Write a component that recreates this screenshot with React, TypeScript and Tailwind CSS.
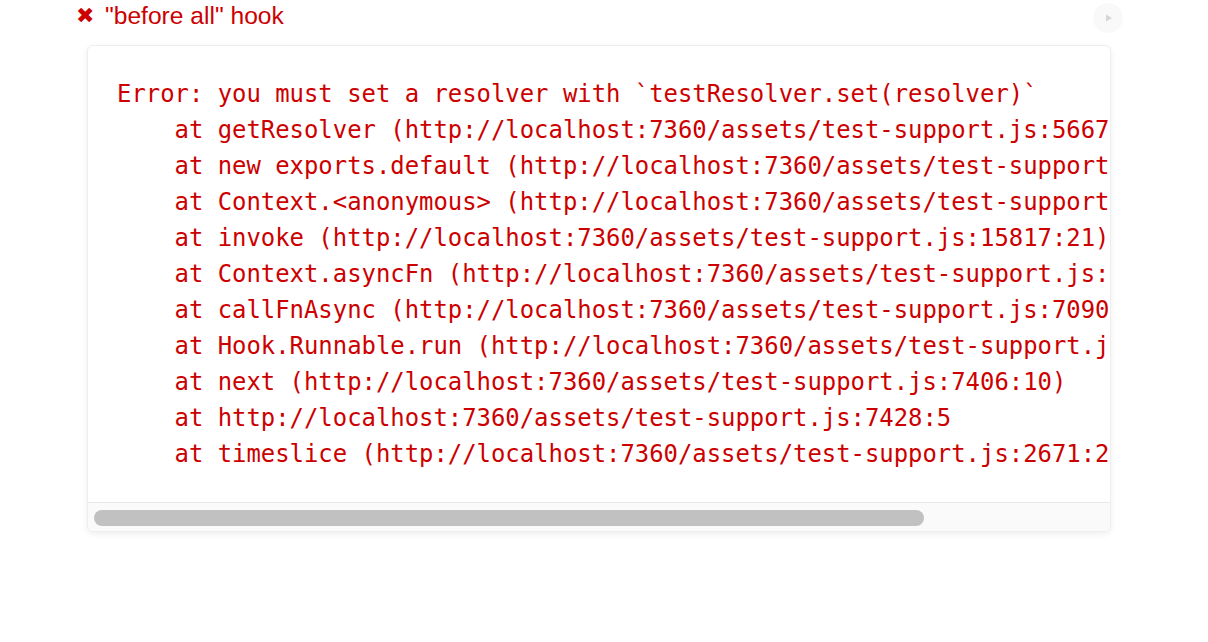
const lines = [
  "Error: you must set a resolver with `testResolver.set(resolver)`",
  "    at getResolver (http://localhost:7360/assets/test-support.js:5667:11)",
  "    at new exports.default (http://localhost:7360/assets/test-support.js:5700:22)",
  "    at Context.<anonymous> (http://localhost:7360/assets/test-support.js:5991:20)",
  "    at invoke (http://localhost:7360/assets/test-support.js:15817:21)",
  "    at Context.asyncFn (http://localhost:7360/assets/test-support.js:15802:11)",
  "    at callFnAsync (http://localhost:7360/assets/test-support.js:7090:8)",
  "    at Hook.Runnable.run (http://localhost:7360/assets/test-support.js:7027:7)",
  "    at next (http://localhost:7360/assets/test-support.js:7406:10)",
  "    at http://localhost:7360/assets/test-support.js:7428:5",
  "    at timeslice (http://localhost:7360/assets/test-support.js:2671:27)",
]

export default function App() {
  return (
    <div className="min-h-[642px] w-[1208px] bg-white">
      <div className="w-[1123px] pl-[76px]">
        {/* Test title + replay */}
        <div className="flex h-[45px] items-start justify-between">
          <h2 className="flex items-center text-[#cc0000] font-['Liberation_Sans',Arial,sans-serif]">
            <span className="w-[29px] text-[22px] leading-[32px] font-['DejaVu_Sans',sans-serif]">✖</span>
            <span className="text-[24.6px] leading-[32px]">"before all" hook</span>
          </h2>
          <a className="mt-[3px] flex h-[30px] w-[30px] items-center justify-center rounded-full bg-[#f9f9f9]">
            <svg width="8" height="8" viewBox="0 0 8 8" className="ml-[1px]">
              <path d="M1 0.5 L7 4 L1 7.5 Z" fill="#d6d6d6" />
            </svg>
          </a>
        </div>

        {/* Error stack */}
        <div className="ml-[11px] w-[1024px] overflow-hidden rounded-[6px] border border-[#eeeeee] bg-white shadow-[0_2px_6px_#eeeeee]">
          <pre className="overflow-hidden whitespace-pre px-[29px] pt-[30px] pb-[30px] text-[23.9px] leading-[36px] text-[#cc0000] font-['DejaVu_Sans_Mono',Menlo,monospace]">
            {lines.join("\n")}
          </pre>
          <div className="h-[29px] border-t border-[#e8e8e8] bg-[#fafafa] pl-[6px] pt-[7px]">
            <div className="h-[16px] w-[830px] rounded-full bg-[#c1c1c1]" />
          </div>
        </div>
      </div>
    </div>
  )
}
